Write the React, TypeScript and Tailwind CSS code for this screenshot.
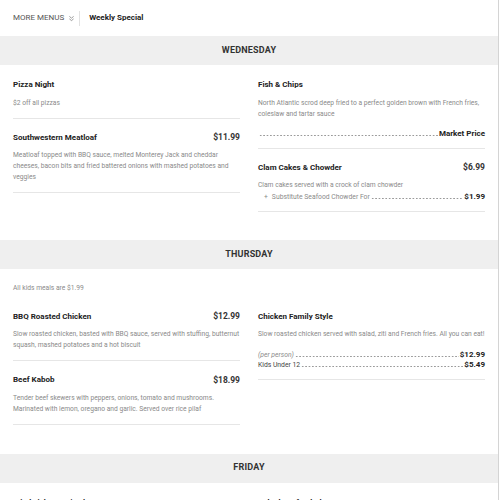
import React from "react";

function Leader({ left, price, leftClass = "" }: { left?: React.ReactNode; price: string; leftClass?: string }) {
  return (
    <div className="flex items-end h-[10px] leading-[10px]">
      {left && <span className={"shrink-0 whitespace-nowrap text-[6.8px] " + leftClass}>{left}</span>}
      <span className="flex-1 min-w-0 h-[3px] mb-[2px] mx-[1px] bg-[radial-gradient(circle,#9a9a9a_0.65px,transparent_0.9px)] bg-[length:3.4px_3px] bg-repeat-x" />
      <span className="shrink-0 whitespace-nowrap text-[8px] font-bold text-[#222]">{price}</span>
    </div>
  );
}

function Item({ title, price, desc, children }: { title: string; price?: string; desc?: React.ReactNode; children?: React.ReactNode }) {
  return (
    <div className="border-b border-[#e6e6e6] pb-[9px] mb-[13px]">
      <div className="flex justify-between items-center h-[12px]">
        <span className="text-[8px] font-bold text-[#222]">{title}</span>
        {price && <span className="text-[8.5px] font-bold text-[#333]">{price}</span>}
      </div>
      {desc && <p className="mt-[6.5px] text-[6.7px] leading-[11px] text-[#8a8a8a]">{desc}</p>}
      {children}
    </div>
  );
}

function Band({ label }: { label: string }) {
  return (
    <div className="h-[29px] bg-[#efefef] flex items-center justify-center">
      <span className="text-[9px] font-bold text-[#333] tracking-[0.2px]">{label}</span>
    </div>
  );
}

export default function App() {
  return (
    <div className="w-[500px] h-[500px] overflow-hidden bg-white" style={{ fontFamily: "Roboto, 'Noto Sans', sans-serif" }}>
      <div className="w-[499px] border-r border-[#d4d4d4] min-h-[500px]">
        <nav className="h-[36px] flex items-center px-[13px]">
          <span className="text-[8px] text-[#555]">MORE MENUS</span>
          <svg className="ml-[4px]" width="7" height="7" viewBox="0 0 10 10" fill="none" stroke="#888" strokeWidth="1.2">
            <path d="M2 2l3 2.5L8 2M2 5.5l3 2.5 3-2.5" />
          </svg>
          <span className="ml-[4px] w-px h-[15px] bg-[#e2e2e2]" />
          <span className="ml-[9px] text-[8px] font-bold text-[#222]">Weekly Special</span>
        </nav>

        <Band label="WEDNESDAY" />
        <div className="px-[13px] pt-[14px] pb-[15px] grid grid-cols-2 gap-x-[18px] items-start">
          <div>
            <Item title="Pizza Night" desc="$2 off all pizzas" />
            <Item
              title="Southwestern Meatloaf"
              price="$11.99"
              desc="Meatloaf topped with BBQ sauce, melted Monterey Jack and cheddar cheeses, bacon bits and fried battered onions with mashed potatoes and veggies"
            />
          </div>
          <div>
            <Item title="Fish & Chips" desc="North Atlantic scrod deep fried to a perfect golden brown with French fries, coleslaw and tartar sauce">
              <div className="mt-[9px]">
                <Leader price="Market Price" />
              </div>
            </Item>
            <Item title="Clam Cakes & Chowder" price="$6.99" desc="Clam cakes served with a crock of clam chowder">
              <div className="pl-[6px] mt-[1px]">
                <Leader left={<><span className="mr-[4px]">+</span>Substitute Seafood Chowder For</>} leftClass="text-[#8a8a8a]" price="$1.99" />
              </div>
            </Item>
          </div>
        </div>

        <Band label="THURSDAY" />
        <div className="px-[13px] pt-[14px] pb-[16px]">
          <p className="text-[6.7px] leading-[11px] text-[#8a8a8a]">All kids meals are $1.99</p>
          <div className="mt-[16.5px] grid grid-cols-2 gap-x-[18px] items-start">
            <div>
              <Item
                title="BBQ Roasted Chicken"
                price="$12.99"
                desc="Slow roasted chicken, basted with BBQ sauce, served with stuffing, butternut squash, mashed potatoes and a hot biscuit"
              />
              <Item
                title="Beef Kabob"
                price="$18.99"
                desc="Tender beef skewers with peppers, onions, tomato and mushrooms. Marinated with lemon, oregano and garlic. Served over rice pilaf"
              />
            </div>
            <div>
              <Item title="Chicken Family Style" desc="Slow roasted chicken served with salad, ziti and French fries. All you can eat!">
                <div className="mt-[10px]">
                  <Leader left={<i>(per person)</i>} leftClass="text-[#8a8a8a]" price="$12.99" />
                  <Leader left="Kids Under 12" leftClass="text-[#444]" price="$5.49" />
                </div>
              </Item>
            </div>
          </div>
        </div>

        <Band label="FRIDAY" />
        <div className="px-[13px] pt-[14px] grid grid-cols-2 gap-x-[18px]">
          <Item title="Fried Fisherman's Plate" />
          <Item title="Baked Seafood Plate" />
        </div>
      </div>
    </div>
  );
}
